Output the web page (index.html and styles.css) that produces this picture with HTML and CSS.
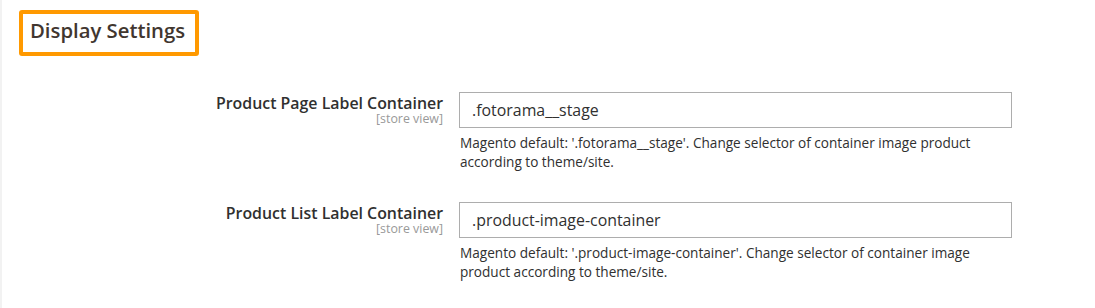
FILE: index.html
```html
<!DOCTYPE html>
<html>
<head>
<meta charset="utf-8">
<link rel="stylesheet" href="styles.css">
</head>
<body>
<div class="page">
  <div class="title-wrap">
    <h2 class="section-title">Display Settings</h2>
  </div>
  <div class="fields">
    <div class="row">
      <div class="label">
        <span class="label-text">Product Page Label Container</span>
        <span class="scope">[store view]</span>
      </div>
      <div class="control">
        <div class="input">.fotorama__stage</div>
        <p class="note">Magento default: '.fotorama__stage'. Change selector of container image product according to theme/site.</p>
      </div>
    </div>
    <div class="row">
      <div class="label">
        <span class="label-text">Product List Label Container</span>
        <span class="scope">[store view]</span>
      </div>
      <div class="control">
        <div class="input">.product-image-container</div>
        <p class="note">Magento default: '.product-image-container'. Change selector of container image product according to theme/site.</p>
      </div>
    </div>
  </div>
</div>
</body>
</html>
```

FILE: styles.css
```css
html, body {
  margin: 0;
  padding: 0;
  background: #ffffff;
}
body {
  font-family: "Open Sans", "Liberation Sans", sans-serif;
  color: #303030;
}
.page {
  width: 1095px;
  height: 308px;
  box-sizing: border-box;
  border-left: 2px solid #f2f2f2;
  padding-top: 10px;
  overflow: hidden;
}
.title-wrap {
  padding-left: 17px;
}
.section-title {
  display: inline-block;
  margin: 0;
  box-sizing: border-box;
  width: 180px;
  height: 46px;
  border: 4px solid #ff9900;
  border-radius: 3px;
  padding: 2px 0 0 7px;
  font-size: 20.3px;
  line-height: 28px;
  font-weight: 600;
  color: #41362f;
}
.fields {
  padding-top: 36px;
}
.row {
  display: grid;
  grid-template-columns: 441px 553px;
  column-gap: 16px;
  margin-bottom: 31px;
}
.label {
  display: flex;
  flex-direction: column;
  align-items: flex-end;
  padding-top: 2px;
}
.label-text {
  font-size: 15.9px;
  font-weight: 600;
  line-height: 18px;
  color: #303030;
}
.scope {
  font-size: 12.4px;
  line-height: 14px;
  color: #999999;
}
.input {
  box-sizing: border-box;
  height: 36px;
  border: 1px solid #adadad;
  padding: 0 12px;
  font-size: 15.9px;
  line-height: 34px;
  color: #303030;
}
.note {
  margin: 5px 0 0 1px;
  font-size: 13.6px;
  line-height: 19px;
  color: #303030;
  width: 518px;
}
```
